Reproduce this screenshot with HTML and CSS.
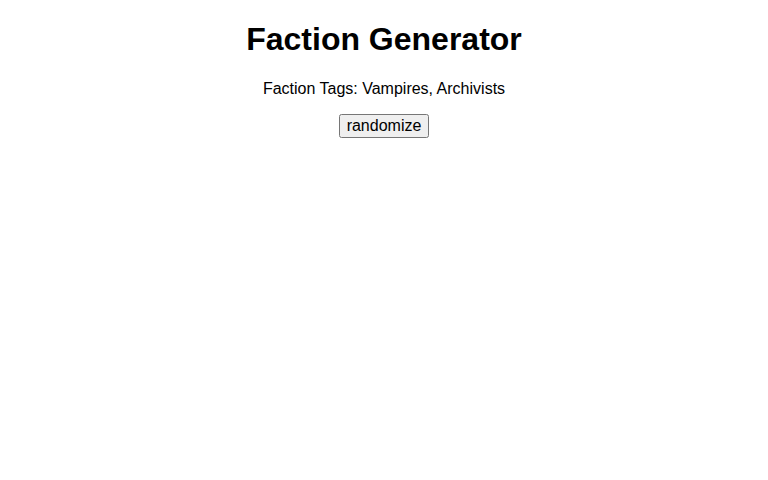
FILE: index.html
```html
<!DOCTYPE html>
<html lang="en">
<head>
    <meta charset="UTF-8">
    <meta name="viewport" content="width=device-width, initial-scale=1.0">
    <title>Faction Generator</title>
    <link rel="stylesheet" href="styles.css">
</head>
<body>
    <div class="app">
        <h1>Faction Generator</h1>
        <p class="tags">Faction Tags: Vampires, Archivists</p>
        <button class="randomize">randomize</button>
    </div>
</body>
</html>
```

FILE: styles.css
```css
body {
    margin: 0;
    font-family: "Liberation Sans", Arial, sans-serif;
    color: #000;
    background: #fff;
}
.app {
    text-align: center;
}
.randomize {
    font-family: inherit;
    font-size: 16px;
}
```
